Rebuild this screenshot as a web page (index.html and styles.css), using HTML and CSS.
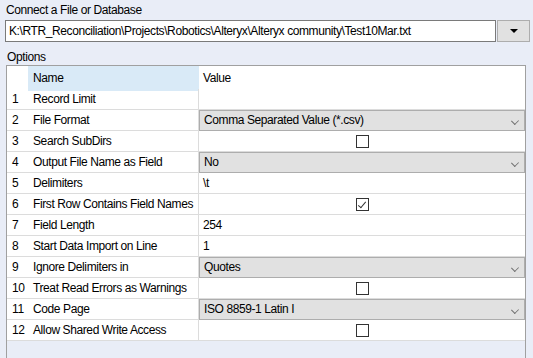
FILE: index.html
```html
<!DOCTYPE html>
<html lang="en">
<head>
    <meta charset="UTF-8">
    <title>Input Data Configuration</title>
    <link rel="stylesheet" href="styles.css">
</head>
<body>
    <div class="config">
        <div class="section-label">Connect a File or Database</div>
        <div class="path-row">
            <div class="path-input">K:\RTR_Reconciliation\Projects\Robotics\Alteryx\Alteryx community\Test10Mar.txt</div>
            <button class="path-button" type="button">
                <svg width="8" height="4" viewBox="0 0 8 4"><polygon points="0,0 8,0 4,4" fill="#000"/></svg>
            </button>
        </div>
        <div class="options-label">Options</div>
        <div class="grid">
            <div class="grid-row header">
                <div class="cell num"></div>
                <div class="cell name selected">Name</div>
                <div class="cell value">Value</div>
            </div>
            <div class="grid-row">
                <div class="cell num">1</div>
                <div class="cell name">Record Limit</div>
                <div class="cell value"></div>
            </div>
            <div class="grid-row">
                <div class="cell num">2</div>
                <div class="cell name">File Format</div>
                <div class="cell value combo">Comma Separated Value (*.csv)<span class="chevron"></span></div>
            </div>
            <div class="grid-row">
                <div class="cell num">3</div>
                <div class="cell name">Search SubDirs</div>
                <div class="cell value check"><span class="checkbox"></span></div>
            </div>
            <div class="grid-row">
                <div class="cell num">4</div>
                <div class="cell name">Output File Name as Field</div>
                <div class="cell value combo">No<span class="chevron"></span></div>
            </div>
            <div class="grid-row">
                <div class="cell num">5</div>
                <div class="cell name">Delimiters</div>
                <div class="cell value">\t</div>
            </div>
            <div class="grid-row">
                <div class="cell num">6</div>
                <div class="cell name">First Row Contains Field Names</div>
                <div class="cell value check"><span class="checkbox checked"></span></div>
            </div>
            <div class="grid-row">
                <div class="cell num">7</div>
                <div class="cell name">Field Length</div>
                <div class="cell value">254</div>
            </div>
            <div class="grid-row">
                <div class="cell num">8</div>
                <div class="cell name">Start Data Import on Line</div>
                <div class="cell value">1</div>
            </div>
            <div class="grid-row">
                <div class="cell num">9</div>
                <div class="cell name">Ignore Delimiters in</div>
                <div class="cell value combo">Quotes<span class="chevron"></span></div>
            </div>
            <div class="grid-row">
                <div class="cell num">10</div>
                <div class="cell name">Treat Read Errors as Warnings</div>
                <div class="cell value check"><span class="checkbox"></span></div>
            </div>
            <div class="grid-row">
                <div class="cell num">11</div>
                <div class="cell name">Code Page</div>
                <div class="cell value combo">ISO 8859-1 Latin I<span class="chevron"></span></div>
            </div>
            <div class="grid-row">
                <div class="cell num">12</div>
                <div class="cell name">Allow Shared Write Access</div>
                <div class="cell value check"><span class="checkbox"></span></div>
            </div>
        </div>
    </div>
</body>
</html>
```

FILE: styles.css
```css
body {
    margin: 0;
    background-color: #e9edf7;
    font-family: "Liberation Sans", Arial, sans-serif;
    font-size: 12px;
    letter-spacing: -0.4px;
    color: #000;
    height: 358px;
    overflow: hidden;
}
.config {
    display: flex;
    flex-direction: column;
    height: 100%;
}
.section-label {
    margin: 3px 0 0 6px;
    line-height: 14px;
}
.path-row {
    display: flex;
    margin: 3px 0 0 5px;
    gap: 1px;
    height: 22px;
}
.path-input {
    width: 491px;
    box-sizing: border-box;
    border: 1px solid #7a7a7a;
    background: #fff;
    padding: 0 3px;
    line-height: 20px;
    white-space: nowrap;
    overflow: hidden;
}
.path-button {
    width: 33px;
    box-sizing: border-box;
    border: 1px solid #adadad;
    background: #e1e1e1;
    padding: 0;
    display: flex;
    align-items: center;
    justify-content: center;
}
.options-label {
    margin: 8px 0 0 7px;
    line-height: 14px;
}
.grid {
    margin: 1px 0 0 6px;
    width: 520px;
    flex: 1;
    box-sizing: border-box;
    border: 1px solid #a0a0a0;
    border-bottom: none;
}
.grid-row {
    display: grid;
    grid-template-columns: 21px 171px 326px;
    height: 21px;
    background: #fff;
}
.grid-row.header {
    height: 23px;
}
.cell {
    box-sizing: border-box;
    line-height: 20px;
    white-space: nowrap;
    border-bottom: 1px solid #dcdcdc;
}
.header .cell {
    line-height: 25px;
    border-bottom: none;
}
.num {
    padding-left: 5px;
}
.name {
    padding-left: 5px;
    border-right: 1px solid #dcdcdc;
}
.name.selected {
    background: #d9eaf7;
    border-right: none;
}
.value {
    padding-left: 4px;
}
.combo {
    position: relative;
    background: #e1e1e1;
    border: 1px solid #adadad;
    line-height: 19px;
}
.chevron {
    position: absolute;
    right: 6px;
    top: 7px;
    width: 5px;
    height: 5px;
    border-right: 1px solid #707070;
    border-bottom: 1px solid #707070;
    transform: rotate(45deg) scaleX(0.9);
}
.check {
    display: flex;
    align-items: center;
    justify-content: center;
    padding-left: 0;
}
.checkbox {
    width: 13px;
    height: 13px;
    box-sizing: border-box;
    border: 1px solid #333;
    background: #fff;
    position: relative;
}
.checkbox.checked::after {
    content: "";
    position: absolute;
    left: 3px;
    top: 1px;
    width: 3px;
    height: 7px;
    border-right: 1px solid #333;
    border-bottom: 1px solid #333;
    transform: rotate(40deg);
}
```
